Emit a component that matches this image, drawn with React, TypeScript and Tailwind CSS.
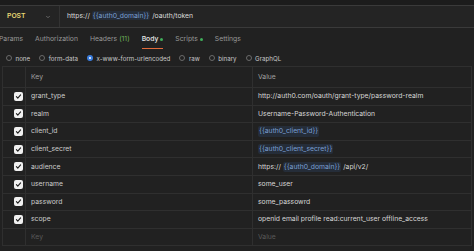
import { ChevronDown } from "lucide-react";

type Part = { text: string; variable?: boolean };

const rows: { key: string; value: Part[] }[] = [
  { key: "grant_type", value: [{ text: "http://auth0.com/oauth/grant-type/password-realm" }] },
  { key: "realm", value: [{ text: "Username-Password-Authentication" }] },
  { key: "client_id", value: [{ text: "{{auth0_client_id}}", variable: true }] },
  { key: "client_secret", value: [{ text: "{{auth0_client_secret}}", variable: true }] },
  {
    key: "audience",
    value: [
      { text: "https:// " },
      { text: "{{auth0_domain}}", variable: true },
      { text: " /api/v2/" },
    ],
  },
  { key: "username", value: [{ text: "some_user" }] },
  { key: "password", value: [{ text: "some_passowrd" }] },
  { key: "scope", value: [{ text: "openid email profile read:current_user offline_access" }] },
];

const bodyTypes = ["none", "form-data", "x-www-form-urlencoded", "raw", "binary", "GraphQL"];

function Variable({ children }: { children: string }) {
  return (
    <span className="rounded-[2px] bg-[#252d39] px-[1px] text-[#7a9fd2]">{children}</span>
  );
}

function Checkbox() {
  return (
    <div className="flex h-[9px] w-[9px] items-center justify-center rounded-[2px] bg-[#f0f0f0]">
      <svg viewBox="0 0 10 10" className="h-[7px] w-[7px]">
        <path d="M2 5.3 L4 7.3 L8 2.6" fill="none" stroke="#1e1e1e" strokeWidth="1.6" strokeLinecap="round" strokeLinejoin="round" />
      </svg>
    </div>
  );
}

function Tab({ label, active, dot, count }: { label: string; active?: boolean; dot?: boolean; count?: string }) {
  return (
    <div className="relative flex h-full items-center">
      <span className={active ? "font-medium text-[#e8e8e8]" : "text-[#979797]"}>{label}</span>
      {count && <span className="ml-[2px] text-[#6db35b]">{count}</span>}
      {dot && <span className="ml-[2px] h-[3px] w-[3px] rounded-full bg-[#3fae5a]" />}
      {active && <span className="absolute bottom-[2px] left-0 h-[1.5px] w-[21px] bg-[#e36b3c]" />}
    </div>
  );
}

export default function App() {
  return (
    <div
      className="h-[251px] w-[474px] overflow-hidden bg-[#212121] text-[6.8px] text-[#d4d4d4]"
      style={{ fontFamily: "Inter, 'Liberation Sans', sans-serif" }}
    >
      {/* request bar */}
      <div className="bg-[#1c1c1c] pt-[5px]">
        <div className="flex h-[23px] items-center border-y border-[#3a3a3a] bg-[#242424]">
          <div className="flex h-full w-[59px] items-center pl-[7px]">
            <span className="font-semibold text-[#e8d874]">POST</span>
            <ChevronDown className="ml-auto mr-[8px] h-[6px] w-[6px] text-[#8a8a8a]" strokeWidth={2.5} />
          </div>
          <div className="h-full border-l border-[#333333]" />
          <div className="pl-[7px] text-[#dcdcdc]">
            https:// <Variable>{"{{auth0_domain}}"}</Variable> /oauth/token
          </div>
        </div>
      </div>

      {/* tabs */}
      <div className="-ml-[1px] flex h-[23px] items-center gap-[12px]">
        <Tab label="Params" />
        <Tab label="Authorization" />
        <Tab label="Headers" count="(11)" />
        <Tab label="Body" active dot />
        <Tab label="Scripts" dot />
        <Tab label="Settings" />
      </div>

      {/* body types */}
      <div className="flex h-[15px] items-center gap-[9px] pl-[6px] text-[6.2px]">
        {bodyTypes.map((t) => {
          const selected = t === "x-www-form-urlencoded";
          return (
            <div key={t} className="flex items-center gap-[3.5px]">
              {selected ? (
                <span className="flex h-[6px] w-[6px] items-center justify-center rounded-full bg-[#3b7ddd]">
                  <span className="h-[2px] w-[2px] rounded-full bg-white" />
                </span>
              ) : (
                <span className="h-[6px] w-[6px] rounded-full border border-[#6a6a6a]" />
              )}
              <span className="text-[#c9c9c9]">{t}</span>
            </div>
          );
        })}
      </div>

      {/* table */}
      <div className="mx-[2px] border-x border-t border-[#2f2f2f]">
        <div className="grid h-[21px] grid-cols-[22px_227px_1fr] border-b border-[#2f2f2f] text-[#a0a0a0]">
          <div />
          <div className="flex items-center border-l border-[#2f2f2f] pl-[5px]">Key</div>
          <div className="flex items-center border-l border-[#2f2f2f] pl-[5px]">Value</div>
        </div>
        {rows.map((r) => (
          <div key={r.key} className="grid h-[17.6px] grid-cols-[22px_227px_1fr] border-b border-[#2f2f2f]">
            <div className="flex items-center pl-[11px]">
              <Checkbox />
            </div>
            <div className="flex items-center border-l border-[#2f2f2f] pl-[5px] text-[#cccccc]">{r.key}</div>
            <div className="flex items-center whitespace-pre border-l border-[#2f2f2f] pl-[5px] text-[#d6d6d6]">
              {r.value.map((p, i) =>
                p.variable ? <Variable key={i}>{p.text}</Variable> : <span key={i}>{p.text}</span>
              )}
            </div>
          </div>
        ))}
        <div className="grid h-[17.6px] grid-cols-[22px_227px_1fr] border-b border-[#2f2f2f] text-[#5a5a5a]">
          <div />
          <div className="flex items-center border-l border-[#2f2f2f] pl-[5px]">Key</div>
          <div className="flex items-center border-l border-[#2f2f2f] pl-[5px]">Value</div>
        </div>
      </div>
    </div>
  );
}
